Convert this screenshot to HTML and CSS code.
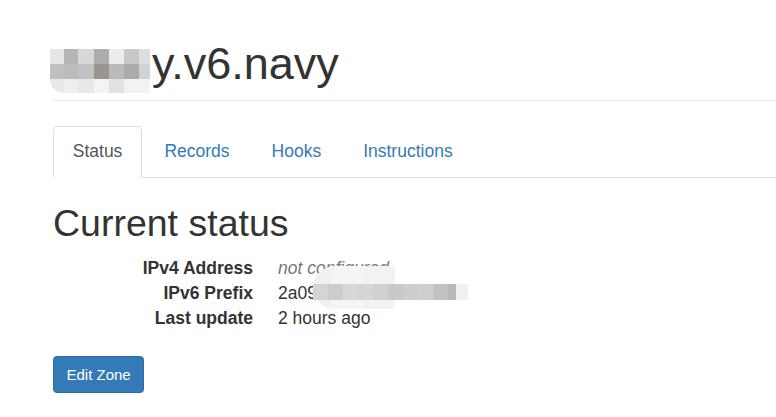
FILE: index.html
```html
<!DOCTYPE html>
<html lang="en">
<head>
<meta charset="utf-8">
<title>Zone</title>
<link rel="stylesheet" href="styles.css">
</head>
<body>
<div class="container">
  <h1 class="page-header">
    <span class="masked">
      <span class="mosaic title-mosaic">
        <span class="m-row r1"></span>
        <span class="m-row r2"></span>
        <span class="m-row r3"></span>
      </span>
    </span>y.v6.navy
  </h1>

  <ul class="nav-tabs">
    <li class="active"><a href="#">Status</a></li>
    <li><a href="#">Records</a></li>
    <li><a href="#">Hooks</a></li>
    <li><a href="#">Instructions</a></li>
  </ul>

  <div class="tab-content">
    <h2>Current status</h2>
    <dl class="dl-horizontal">
      <dt>IPv4 Address</dt>
      <dd><em class="text-muted">not configured</em></dd>
      <dt>IPv6 Prefix</dt>
      <dd class="prefix">2a09<span class="blob"></span><span class="mosaic prefix-mosaic"></span></dd>
      <dt>Last update</dt>
      <dd>2 hours ago</dd>
    </dl>
    <a class="btn btn-primary btn-sm" href="#">Edit Zone</a>
  </div>
</div>
</body>
</html>
```

FILE: styles.css
```css
html, body {
  margin: 0;
  padding: 0;
  background: #fff;
}

body {
  font-family: "Liberation Sans", Arial, Helvetica, sans-serif;
  font-size: 17.5px;
  line-height: 25px;
  color: #333;
  overflow: hidden;
}

.container {
  padding: 0 0 0 53px;
}

.page-header {
  position: relative;
  margin: 39px 0 25px;
  padding-bottom: 11px;
  border-bottom: 1px solid #eee;
  font-size: 45px;
  line-height: 49.5px;
  font-weight: normal;
  white-space: nowrap;
}

.masked {
  display: inline-block;
  position: relative;
  width: 99px;
  height: 1px;
}

.mosaic {
  position: absolute;
  display: block;
}

.title-mosaic {
  left: -3px;
  top: -29px;
  width: 100px;
}

.m-row {
  display: block;
  height: 15px;
}

.r1 {
  background: linear-gradient(to right,
    #e6e6e6 0 14px, #b5b5b5 14px 28px, #d8d8d8 28px 44px, #adadad 44px 59px,
    #ececec 59px 74px, #c8c8c8 74px 89px, #dedede 89px 100px);
}

.r2 {
  background: linear-gradient(to right,
    #c0c0c0 0 14px, #bcbcbc 14px 28px, #c2c2c2 28px 44px, #99958e 44px 59px,
    #bababa 59px 74px, #a9abad 74px 89px, #d0d2d4 89px 100px);
}

.r3 {
  height: 14px;
  border-bottom-left-radius: 14px;
  background: linear-gradient(to right,
    #e9e9e9 0 14px, #eeeeee 14px 28px, #e8e8e8 28px 44px, #f4f4f4 44px 59px,
    #e2e2e2 59px 74px, #f2f2f2 74px 89px, #f2f2f2 89px 100px);
}

.nav-tabs {
  display: flex;
  list-style: none;
  margin: 0;
  padding: 0;
  border-bottom: 1px solid #ddd;
}

.nav-tabs li {
  margin-bottom: -1px;
}

.nav-tabs a {
  display: block;
  margin-right: 2.5px;
  padding: 12.5px 18.75px;
  line-height: 25px;
  border: 1px solid transparent;
  border-radius: 5px 5px 0 0;
  color: #337ab7;
  text-decoration: none;
}

.nav-tabs .active a {
  color: #555;
  background: #fff;
  border-color: #ddd #ddd transparent;
}

.tab-content h2 {
  margin: 25px 0 12.5px;
  font-size: 37.5px;
  line-height: 41.25px;
  font-weight: normal;
}

.dl-horizontal {
  display: grid;
  grid-template-columns: 200px 1fr;
  column-gap: 25px;
  margin: 0 0 25px;
}

.dl-horizontal dt {
  font-weight: bold;
  text-align: right;
  white-space: nowrap;
}

.dl-horizontal dd {
  margin: 0;
  white-space: nowrap;
}

.text-muted {
  color: #777;
}

.prefix {
  position: relative;
}

.blob {
  position: absolute;
  left: 35px;
  top: -15px;
  width: 82px;
  height: 43px;
  background: linear-gradient(to right, #f0f0f0 0 18px, #f5f5f5 18px 50px, #f2f2f2 50px 82px);
  border-radius: 22px 4px 4px 22px;
}

.prefix-mosaic {
  left: 35px;
  top: 3px;
  width: 155px;
  height: 16px;
  background: linear-gradient(to right,
    #d4d4d4 0 15px, #cccccc 15px 30px, #d8d8d8 30px 45px, #d5d5d5 45px 60px,
    #d0d0d0 60px 75px, #c8c8c8 75px 90px, #cdcdcd 90px 105px, #cfcfcf 105px 120px,
    #c2c2c2 120px 135px, #b9b9bb 135px 143px, #f0f0f2 143px 155px);
}

.btn {
  display: inline-block;
  padding: 6.25px 12.5px;
  font-size: 15px;
  line-height: 22.5px;
  border: 1px solid transparent;
  border-radius: 3.75px;
  text-decoration: none;
}

.btn-primary {
  color: #fff;
  background: #337ab7;
  border-color: #2e6da4;
}
```
